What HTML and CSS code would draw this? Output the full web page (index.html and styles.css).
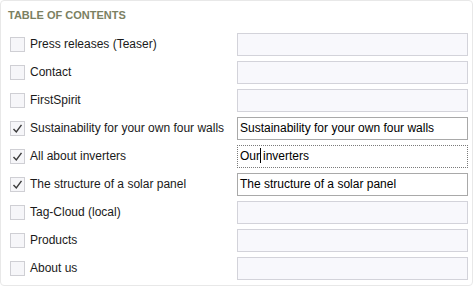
FILE: index.html
```html
<!DOCTYPE html>
<html>
<head>
<meta charset="utf-8">
<link rel="stylesheet" href="styles.css">
</head>
<body>
<div class="panel">
  <div class="heading">TABLE OF CONTENTS</div>
  <div class="rows">
    <span class="box"></span><span class="label">Press releases (Teaser)</span><div class="field empty"></div>
    <span class="box"></span><span class="label">Contact</span><div class="field empty"></div>
    <span class="box"></span><span class="label">FirstSpirit</span><div class="field empty"></div>
    <span class="box"><svg viewBox="0 0 15 15" width="15" height="15"><path d="M3.5 8 L6.3 11 L11.5 3.8" fill="none" stroke="#3a3a3a" stroke-width="1.4"/></svg></span><span class="label">Sustainability for your own four walls</span><div class="field">Sustainability for your own four walls</div>
    <span class="box"><svg viewBox="0 0 15 15" width="15" height="15"><path d="M3.5 8 L6.3 11 L11.5 3.8" fill="none" stroke="#3a3a3a" stroke-width="1.4"/></svg></span><span class="label">All about inverters</span><div class="field focus">Our<span class="caret"></span>inverters</div>
    <span class="box"><svg viewBox="0 0 15 15" width="15" height="15"><path d="M3.5 8 L6.3 11 L11.5 3.8" fill="none" stroke="#3a3a3a" stroke-width="1.4"/></svg></span><span class="label">The structure of a solar panel</span><div class="field">The structure of a solar panel</div>
    <span class="box"></span><span class="label">Tag-Cloud (local)</span><div class="field empty"></div>
    <span class="box"></span><span class="label">Products</span><div class="field empty"></div>
    <span class="box"></span><span class="label">About us</span><div class="field empty"></div>
  </div>
</div>
</body>
</html>
```
FILE: styles.css
```css
html, body {
  margin: 0;
  padding: 0;
  background: #ffffff;
}
body {
  font-family: "Liberation Sans", Arial, sans-serif;
  font-size: 12px;
  color: #1a1a1a;
}
.panel {
  box-sizing: border-box;
  width: 473px;
  height: 286px;
  border: 1px solid #e8e8e8;
  border-radius: 4px;
  padding: 7px 4px 4px 9px;
}
.heading {
  font-size: 11px;
  font-weight: bold;
  line-height: 14px;
  color: #7b8062;
  margin: 0 0 11px -2px;
}
.rows {
  display: grid;
  grid-template-columns: 15px 1fr 232px;
  grid-auto-rows: 23px;
  row-gap: 5px;
  column-gap: 5px;
  align-items: center;
}
.box {
  box-sizing: border-box;
  width: 15px;
  height: 15px;
  border: 1px solid #cfcfd4;
  background: #f6f6f9;
  display: block;
  position: relative;
}
.box svg {
  position: absolute;
  left: -1px;
  top: -1px;
}
.label {
  white-space: nowrap;
  line-height: 15px;
}
.field {
  box-sizing: border-box;
  height: 23px;
  border: 1px solid #a9a9a9;
  background: #ffffff;
  padding: 0 2px;
  line-height: 21px;
  color: #000;
  white-space: nowrap;
  overflow: hidden;
  margin-left: 1px;
}
.field.empty {
  border-color: #d3d3da;
  background: #f8f8fc;
}
.field.focus {
  border: 1px dotted #7a7a7a;
}
.caret {
  display: inline-block;
  width: 0;
  height: 15px;
  border-left: 1px solid #000;
  vertical-align: -3px;
  margin: 0 2px 0 0;
}
```
